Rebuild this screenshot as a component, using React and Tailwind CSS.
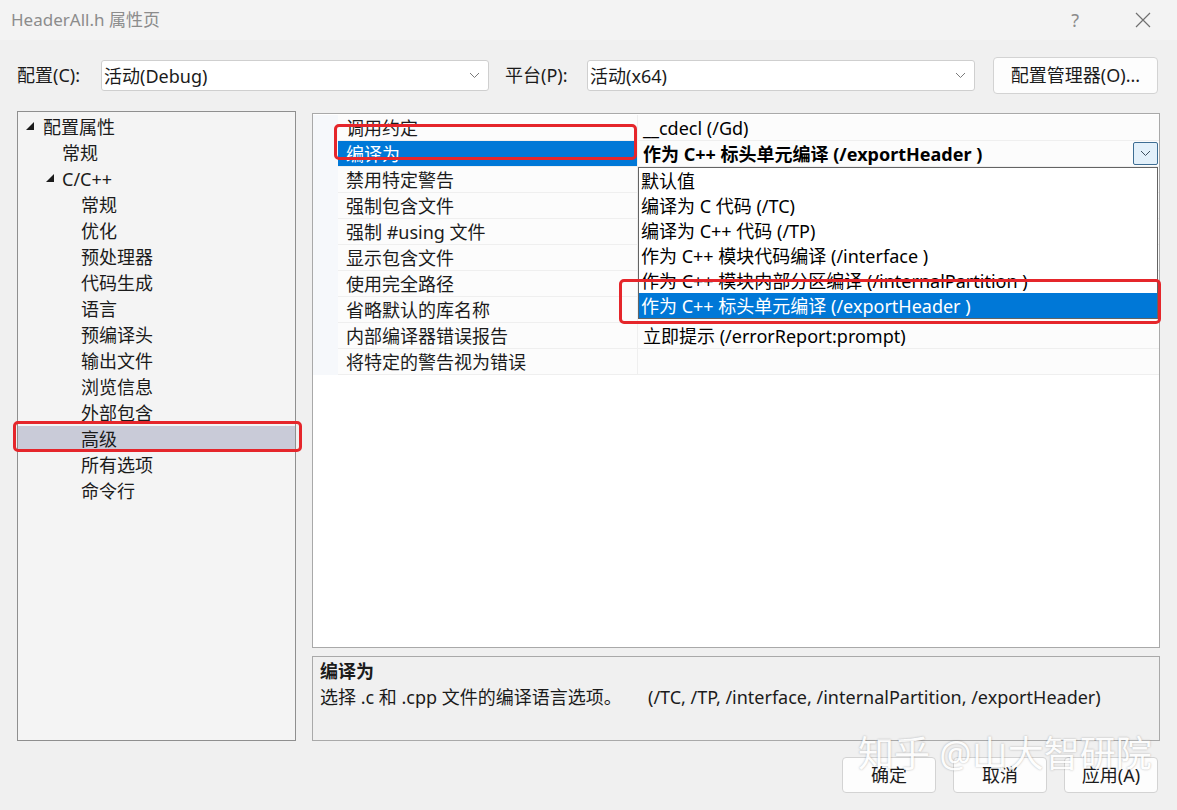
const treeItems = [
  { label: "配置属性", indent: 43, arrow: 25 },
  { label: "常规", indent: 62 },
  { label: "C/C++", indent: 62, arrow: 45 },
  { label: "常规", indent: 81 },
  { label: "优化", indent: 81 },
  { label: "预处理器", indent: 81 },
  { label: "代码生成", indent: 81 },
  { label: "语言", indent: 81 },
  { label: "预编译头", indent: 81 },
  { label: "输出文件", indent: 81 },
  { label: "浏览信息", indent: 81 },
  { label: "外部包含", indent: 81 },
  { label: "高级", indent: 81, selected: true },
  { label: "所有选项", indent: 81 },
  { label: "命令行", indent: 81 },
];

const gridRows = [
  { name: "调用约定", value: "__cdecl (/Gd)" },
  { name: "编译为", value: "作为 C++ 标头单元编译 (/exportHeader )", selected: true },
  { name: "禁用特定警告", value: "" },
  { name: "强制包含文件", value: "" },
  { name: "强制 #using 文件", value: "" },
  { name: "显示包含文件", value: "" },
  { name: "使用完全路径", value: "" },
  { name: "省略默认的库名称", value: "" },
  { name: "内部编译器错误报告", value: "立即提示 (/errorReport:prompt)" },
  { name: "将特定的警告视为错误", value: "" },
];

const options = [
  "默认值",
  "编译为 C 代码 (/TC)",
  "编译为 C++ 代码 (/TP)",
  "作为 C++ 模块代码编译 (/interface )",
  "作为 C++ 模块内部分区编译 (/internalPartition )",
  "作为 C++ 标头单元编译 (/exportHeader )",
];

const Chevron = ({ color = "#606060" }) => (
  <svg width="11" height="7" viewBox="0 0 11 7" fill="none">
    <polyline points="1,1 5.5,5.5 10,1" stroke={color} strokeWidth="1" />
  </svg>
);

const Expanded = () => (
  <svg width="8" height="8" viewBox="0 0 8 8">
    <polygon points="8,0 8,8 0,8" fill="#1b1b1b" />
  </svg>
);

const Combo = ({ text }) => (
  <div className="flex h-[31px] w-[388px] items-center justify-between rounded-[3px] border border-[#cfcfcf] bg-white pl-[2px] pr-[8px]">
    <span className="leading-none">{text}</span>
    <Chevron color="#7a7a7a" />
  </div>
);

const Button = ({ children, className = "" }) => (
  <div className={`flex items-center justify-center rounded-[4px] border border-[#d3d3d3] bg-[#fdfdfd] ${className}`}>
    {children}
  </div>
);

export default function App() {
  return (
    <div className="relative flex h-[810px] w-[1177px] flex-col overflow-hidden bg-[#f0f0f0] font-['Noto_Sans','Noto_Sans_CJK_SC',sans-serif] text-[18px] text-[#1b1b1b]">
      {/* title bar */}
      <div className="flex h-[40px] items-center justify-between bg-[#f3f3f3] pl-[11px] pr-[26px]">
        <span className="text-[17px] text-[#8c8c8c]">HeaderAll.h 属性页</span>
        <div className="flex items-center gap-[56px]">
          <span className="text-[18px] text-[#8c8c8c]">?</span>
          <svg width="16" height="16" viewBox="0 0 16 16">
            <path d="M1 1 L15 15 M15 1 L1 15" stroke="#707070" strokeWidth="1.2" />
          </svg>
        </div>
      </div>

      {/* configuration row */}
      <div className="mt-[17px] flex h-[37px] items-center px-[17px]">
        <span className="w-[84px]">配置(C):</span>
        <Combo text="活动(Debug)" />
        <span className="ml-[16px] w-[82px]">平台(P):</span>
        <Combo text="活动(x64)" />
        <Button className="ml-[18px] h-[37px] w-[165px]">配置管理器(O)...</Button>
      </div>

      {/* main */}
      <div className="mt-[17px] flex h-[630px] gap-[16px] px-[17px]">
        <div className="w-[279px] border border-[#8f8f8f] bg-[#f4f4f4] pt-[2px]">
          {treeItems.map((it, i) => (
            <div
              key={i}
              className={`relative flex h-[26px] items-center ${it.selected ? "bg-[#c9cbd8]" : ""}`}
            >
              {it.arrow && (
                <span className="absolute top-[8px]" style={{ left: it.arrow - 17 }}>
                  <Expanded />
                </span>
              )}
              <span className="leading-none" style={{ paddingLeft: it.indent - 18 }}>
                {it.label}
              </span>
            </div>
          ))}
        </div>

        <div className="flex flex-1 flex-col gap-[8px] pt-[2px]">
          <div className="relative h-[535px] border border-[#a9a9a9] bg-white pt-[1px]">
            {gridRows.map((r, i) => (
              <div key={i} className="flex h-[26px] bg-[#fcfcfc]">
                <div className="w-[25px] bg-[#f6f8fb]" />
                <div
                  className={`flex w-[300px] items-center border-b border-r border-[#efefef] pl-[8px] ${
                    r.selected ? "border-[#0078d7] bg-[#0078d7] text-white" : "text-[#1b1b1b]"
                  }`}
                >
                  <span className="leading-none">{r.name}</span>
                </div>
                <div className="flex flex-1 items-center justify-between border-b border-[#efefef] pl-[5px] pr-[1px]">
                  <span className={`leading-none ${r.selected ? "font-bold text-black" : "text-black"}`}>
                    {r.value}
                  </span>
                  {r.selected && (
                    <div className="flex h-[23px] w-[25px] items-center justify-center rounded-[2px] border border-[#3d6d93] bg-[#e3f0fa]">
                      <Chevron color="#3d4f5e" />
                    </div>
                  )}
                </div>
              </div>
            ))}

            {/* open dropdown list */}
            <div className="absolute left-[325px] right-[1px] top-[53px] border border-[#646464] bg-white">
              {options.map((o, i) => (
                <div
                  key={i}
                  className={`flex h-[25px] items-center pl-[2px] ${
                    i === 5 ? "bg-[#0078d7] text-white" : "text-black"
                  }`}
                >
                  <span className="leading-none">{o}</span>
                </div>
              ))}
            </div>
          </div>

          <div className="h-[85px] border border-[#a9a9a9] bg-[#f0f0f0] px-[7px] pt-[1px] leading-[26px]">
            <div className="font-bold">编译为</div>
            <div className="flex">
              <span className="w-[328px]">选择 .c 和 .cpp 文件的编译语言选项。</span>
              <span>(/TC, /TP, /interface, /internalPartition, /exportHeader)</span>
            </div>
          </div>
        </div>
      </div>

      {/* dialog buttons */}
      <div className="mt-[16px] flex justify-end gap-[17px] pr-[19px]">
        <Button className="h-[36px] w-[94px]">确定</Button>
        <Button className="h-[36px] w-[94px]">取消</Button>
        <Button className="h-[36px] w-[94px]">应用(A)</Button>
      </div>

      {/* annotation boxes */}
      <div className="absolute left-[334px] top-[124px] h-[36px] w-[303px] rounded-[5px] border-[3px] border-[#e5262b]" />
      <div className="absolute left-[619px] top-[279px] h-[45px] w-[542px] rounded-[5px] border-[3px] border-[#e5262b]" />
      <div className="absolute left-[13px] top-[421px] h-[31px] w-[289px] rounded-[5px] border-[3px] border-[#e5262b]" />

      {/* watermark */}
      <div className="absolute left-[858px] top-[736px] text-[36px] leading-none text-white opacity-85 [text-shadow:0_0_2px_rgba(0,0,0,0.35)]">
        知乎 @山大智研院
      </div>
    </div>
  );
}
